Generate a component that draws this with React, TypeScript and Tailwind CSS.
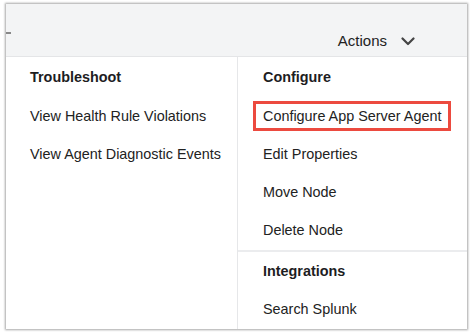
const font = { fontFamily: '"Liberation Sans", Arial, sans-serif' };

function Row({ children, bold = false, boxed = false }: { children: string; bold?: boolean; boxed?: boolean }) {
  return (
    <div className="h-[38.3px] flex items-center relative">
      {boxed && (
        <div className="absolute left-[-10px] top-[4px] w-[198px] h-[30px] border-[3px] border-[#ec4a3f]" />
      )}
      <span className={bold ? 'font-bold text-[#1d1d1f]' : 'text-[#222]'}>{children}</span>
    </div>
  );
}

export default function App() {
  return (
    <div className="w-[474px] h-[334px] bg-white overflow-hidden pt-[4px] pl-[6px]" style={font}>
      <div className="w-[461px] h-[325px] bg-white flex flex-col shadow-[0_0_2px_1px_rgba(0,0,0,0.35)] text-[14.4px]">
        {/* Header */}
        <div className="h-[55px] bg-[#f3f4f5] border-b border-[#e4e5e7] relative flex items-center justify-end pr-[52px]">
          <div className="absolute left-0 top-[28px] w-[5px] h-[2px] bg-[#888]" />
          <span className="text-[#222] text-[15px] mt-[22px]">Actions</span>
          <svg className="ml-[14px] mt-[24px]" width="14" height="9" viewBox="0 0 14 9" fill="none">
            <path d="M1.5 1.5 L7 7 L12.5 1.5" stroke="#444" strokeWidth="2.2" strokeLinecap="round" strokeLinejoin="round" />
          </svg>
        </div>
        {/* Body */}
        <div className="flex flex-1 pt-[2px]">
          <div className="w-[232px] border-r border-[#e6e7e9] pl-[24px] -mt-[2px] pt-[2px]">
            <Row bold>Troubleshoot</Row>
            <Row>View Health Rule Violations</Row>
            <Row>View Agent Diagnostic Events</Row>
          </div>
          <div className="flex-1 flex flex-col">
            <div className="pl-[25px]">
              <Row bold>Configure</Row>
              <Row boxed>Configure App Server Agent</Row>
              <Row>Edit Properties</Row>
              <Row>Move Node</Row>
              <Row>Delete Node</Row>
            </div>
            <div className="border-t-2 border-[#ebecee] pl-[25px]">
              <Row bold>Integrations</Row>
              <Row>Search Splunk</Row>
            </div>
          </div>
        </div>
      </div>
    </div>
  );
}
